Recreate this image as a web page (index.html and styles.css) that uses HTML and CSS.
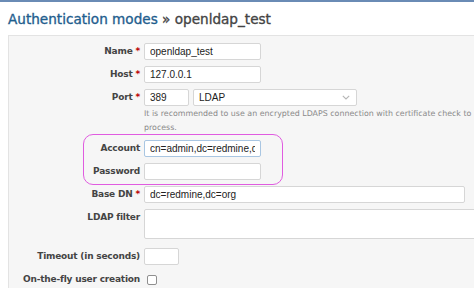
FILE: index.html
```html
<!DOCTYPE html>
<html lang="en">
<head>
<meta charset="utf-8">
<title>Authentication modes » openldap_test</title>
<link rel="stylesheet" href="styles.css">
</head>
<body>
<div class="topbar"></div>
<h2 class="title"><a class="crumb" href="#">Authentication modes</a> » openldap_test</h2>
<div class="box">
  <div class="row">
    <label class="lbl">Name <span class="req">*</span></label>
    <input class="field w-md" type="text" value="openldap_test">
  </div>
  <div class="row">
    <label class="lbl">Host <span class="req">*</span></label>
    <input class="field w-md" type="text" value="127.0.0.1">
  </div>
  <div class="row row-port">
    <label class="lbl">Port <span class="req">*</span></label>
    <input class="field w-port" type="text" value="389">
    <div class="select">
      <span>LDAP</span>
      <svg class="chev" width="8" height="5" viewBox="0 0 8 5"><path d="M0.8 0.8 L4 4 L7.2 0.8" fill="none" stroke="#b5b5b5" stroke-width="1.1"/></svg>
    </div>
  </div>
  <p class="hint">It is recommended to use an encrypted LDAPS connection with certificate check to<br>process.</p>
  <div class="row">
    <label class="lbl">Account</label>
    <input class="field w-md focused" type="text" value="cn=admin,dc=redmine,dc=org">
  </div>
  <div class="row">
    <label class="lbl">Password</label>
    <input class="field w-md" type="password" value="">
  </div>
  <div class="row">
    <label class="lbl">Base DN <span class="req">*</span></label>
    <input class="field w-lg" type="text" value="dc=redmine,dc=org">
  </div>
  <div class="row row-top row-area">
    <label class="lbl">LDAP filter</label>
    <textarea class="area"></textarea>
  </div>
  <div class="row">
    <label class="lbl">Timeout (in seconds)</label>
    <input class="field w-sm" type="text" value="">
  </div>
  <div class="row row-last">
    <label class="lbl">On-the-fly user creation</label>
    <input class="check" type="checkbox">
  </div>
</div>
<div class="highlight"></div>
</body>
</html>
```
FILE: styles.css
```css
html, body {
  margin: 0;
  padding: 0;
  background: #ffffff;
  overflow: hidden;
}
body {
  width: 474px;
  height: 290px;
  position: relative;
  font-family: "DejaVu Sans", Verdana, sans-serif;
}
.topbar {
  height: 2px;
  background: #6a8bb5;
}
.title {
  margin: 9px 0 8px 8px;
  font-size: 13.6px;
  line-height: 16px;
  font-weight: normal;
  color: #444444;
  white-space: nowrap;
  -webkit-text-stroke: 0.35px currentColor;
}
.crumb {
  color: #1f5e8e;
  text-decoration: none;
}
.box {
  margin-left: 8px;
  width: 520px;
  background: #f6f6f6;
  border: 1px solid #e3e3e3;
  border-bottom: 0;
  padding: 7px 0 0 0;
  box-sizing: border-box;
}
.row {
  display: flex;
  align-items: center;
  gap: 4px;
  margin-bottom: 6px;
}
.row-port { margin-bottom: 1px; }
.row-top { align-items: flex-start; }
.row-area { margin-bottom: 9px; }
.row-last { margin-bottom: 0; height: 17px; }
.lbl {
  width: 131px;
  flex-shrink: 0;
  text-align: right;
  font-weight: bold;
  font-size: 9px;
  line-height: 17px;
  letter-spacing: -0.2px;
  color: #444444;
  white-space: nowrap;
}
.req { color: #bb0000; }
.field {
  box-sizing: border-box;
  height: 17px;
  margin: 0;
  padding: 0 5px;
  border: 1px solid #d6d6d6;
  border-radius: 2px;
  background: #ffffff;
  font-family: "Liberation Sans", Arial, sans-serif;
  font-size: 10px;
  color: #222222;
  outline: none;
}
.focused { border-color: #a9c6e2; }
.w-md { width: 117px; }
.w-port { width: 45px; }
.w-lg { width: 321px; }
.w-sm { width: 35px; }
.select {
  box-sizing: border-box;
  width: 164px;
  height: 17px;
  display: flex;
  align-items: center;
  justify-content: space-between;
  padding: 0 6px 0 5px;
  border: 1px solid #d6d6d6;
  border-radius: 2px;
  background: #ffffff;
  font-family: "Liberation Sans", Arial, sans-serif;
  font-size: 10px;
  color: #222222;
}
.chev { display: block; }
.hint {
  margin: 0 0 5px 135px;
  font-size: 7.9px;
  line-height: 14px;
  color: #8a8a8a;
  white-space: nowrap;
}
.area {
  box-sizing: border-box;
  width: 360px;
  height: 30px;
  margin: 0;
  padding: 0;
  border: 1px solid #d6d6d6;
  border-radius: 2px;
  background: #ffffff;
  resize: none;
}
.check {
  appearance: none;
  -webkit-appearance: none;
  box-sizing: border-box;
  width: 10px;
  height: 10px;
  margin: 0 0 0 3px;
  border: 1px solid #8f8f8f;
  border-radius: 2px;
  background: #ffffff;
}
.highlight {
  position: absolute;
  left: 83px;
  top: 134px;
  width: 200px;
  height: 51px;
  box-sizing: border-box;
  border: 1.5px solid #e05ce0;
  border-radius: 10px;
  pointer-events: none;
}
```
